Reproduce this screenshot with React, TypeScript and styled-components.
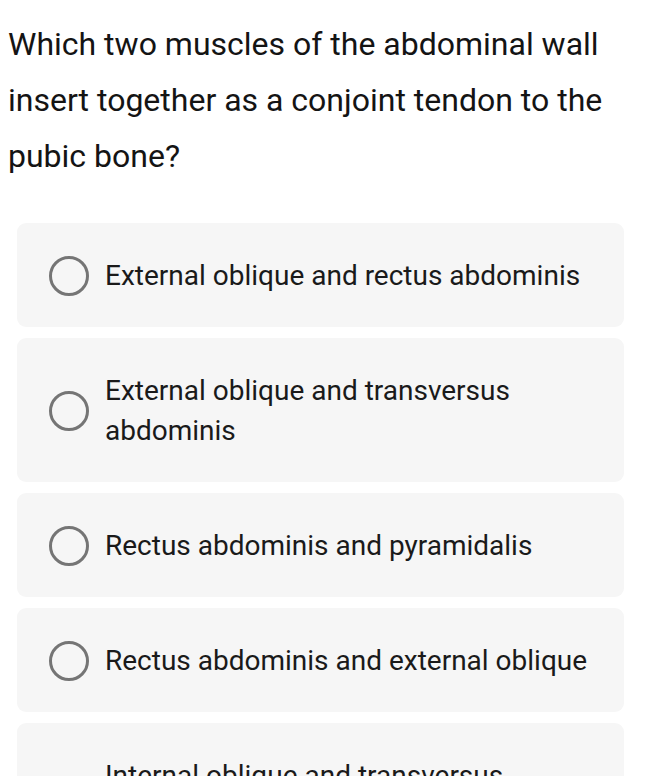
import { createGlobalStyle, styled } from "styled-components";

const GlobalStyle = createGlobalStyle`
  html, body {
    margin: 0;
    padding: 0;
    background: #ffffff;
  }
  body {
    font-family: Roboto, "Noto Sans", "Liberation Sans", sans-serif;
    color: #1c1c1c;
  }
`;

const options = [
  "External oblique and rectus abdominis",
  "External oblique and transversus abdominis",
  "Rectus abdominis and pyramidalis",
  "Rectus abdominis and external oblique",
  "Internal oblique and transversus abdominis",
];

export default function App() {
  return (
    <>
      <GlobalStyle />
      <Page>
        <Question>
          Which two muscles of the abdominal wall insert together as a conjoint
          tendon to the pubic bone?
        </Question>
        <OptionList>
          {options.map((text) => (
            <OptionCard key={text}>
              <Radio />
              <OptionText>{text}</OptionText>
            </OptionCard>
          ))}
        </OptionList>
      </Page>
    </>
  );
}

const Page = styled.div`
  padding: 16px 37px 0 8px;
`;

const Question = styled.h1`
  margin: 0 0 39px 0;
  font-size: 32px;
  font-weight: 400;
  line-height: 56px;
  color: #141414;
`;

const OptionList = styled.div`
  display: flex;
  flex-direction: column;
  gap: 11px;
  margin-left: 9px;
`;

const OptionCard = styled.div`
  display: flex;
  align-items: center;
  gap: 16px;
  padding: 33px 32px 31px;
  background: #f6f6f6;
  border-radius: 9px;
`;

const Radio = styled.span`
  flex: none;
  box-sizing: border-box;
  width: 40px;
  height: 40px;
  border: 3.5px solid #757575;
  border-radius: 50%;
`;

const OptionText = styled.span`
  font-size: 28px;
  line-height: 40px;
  color: #1a1a1a;
`;
